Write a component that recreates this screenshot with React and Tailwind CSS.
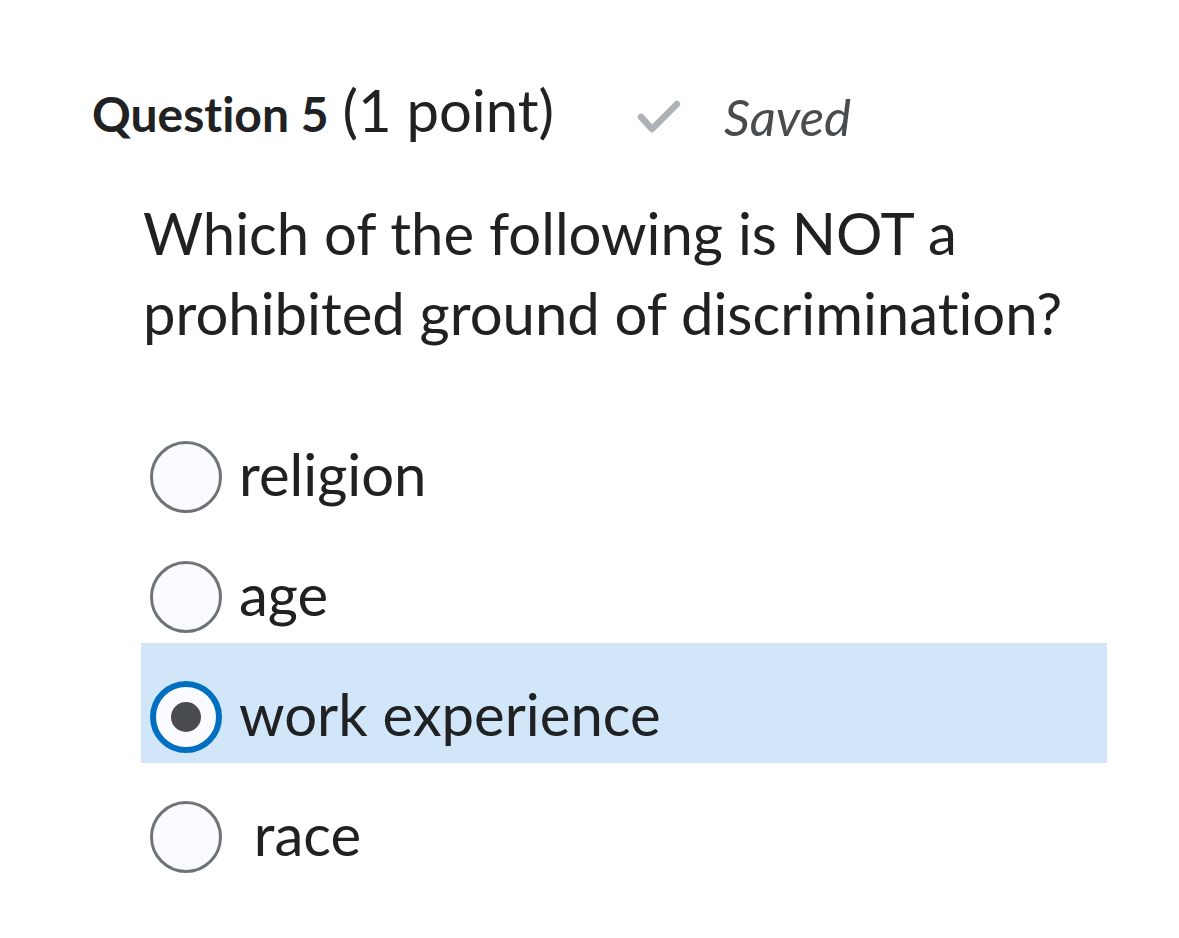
import React, { useState } from 'react';

const options = ['religion', 'age', 'work experience', ' race'];

function Radio({ checked }) {
  if (checked) {
    return (
      <span className="w-[72px] h-[72px] shrink-0 rounded-full border-[6px] border-[#006fbf] bg-[#f9fbff] flex items-center justify-center">
        <span className="w-[30px] h-[30px] rounded-full bg-[#494c4e]" />
      </span>
    );
  }
  return <span className="w-[72px] h-[72px] shrink-0 rounded-full border-[3px] border-[#6e7376] bg-[#f9fbff]" />;
}

export default function App() {
  const [selected, setSelected] = useState(2);

  return (
    <div className="min-h-screen bg-white text-[#202122] font-['Lato',sans-serif] [font-variant-ligatures:none] pl-[92px] pt-[80px]">
      {/* Header */}
      <div className="flex items-baseline h-[60px] leading-[60px]">
        <span className="text-[48px] font-bold">Question 5</span>
        <span className="ml-[14px] text-[58px]">(1 point)</span>
        <svg className="ml-[80px] w-[50px] h-[40px] self-start mt-[17px]" viewBox="0 0 50 40" fill="none">
          <path d="M7 20l11 12L43 7" stroke="#aeb2b6" strokeWidth="6.5" strokeLinecap="round" strokeLinejoin="round" />
        </svg>
        <span className="ml-[40px] text-[51px] italic text-[#494c4e] translate-y-[4px]">Saved</span>
      </div>

      {/* Question */}
      <p className="ml-[51px] mt-[53px] text-[58px] leading-[80px] w-[960px]">
        Which of the following is NOT a prohibited ground of discrimination?
      </p>

      {/* Options */}
      <div className="mt-[50px] ml-[49px] w-[966px]">
        {options.map((opt, i) => (
          <label
            key={opt}
            onClick={() => setSelected(i)}
            className={`flex items-center h-[120px] pt-[27px] pl-[9px] cursor-pointer ${selected === i ? 'bg-[#d1e6f9]' : ''}`}
          >
            <Radio checked={selected === i} />
            <span className="ml-[17px] text-[58px] leading-none whitespace-pre pb-[6px]">{opt}</span>
          </label>
        ))}
      </div>
    </div>
  );
}
